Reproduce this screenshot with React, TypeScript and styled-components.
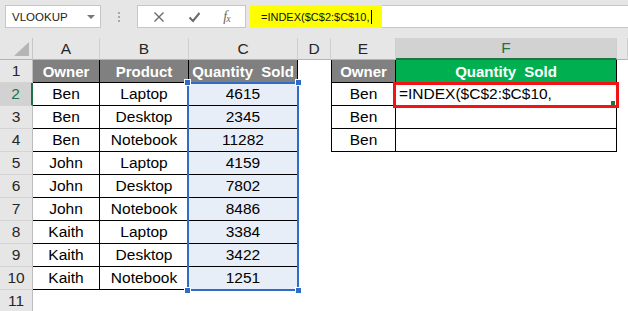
import React from 'react';
import styled, { createGlobalStyle, css } from 'styled-components';

const GlobalStyle = createGlobalStyle`
  html, body {
    margin: 0;
    padding: 0;
    background: #ffffff;
    overflow: hidden;
  }
  body {
    font-family: "Liberation Sans", Arial, sans-serif;
  }
`;

const GREEN = '#217346';
const BLUE = '#2f6cc8';

export const Window = styled.div`
  width: 628px;
  height: 311px;
  overflow: hidden;
  background: #ffffff;
`;

export const Toolbar = styled.div`
  height: 38px;
  box-sizing: border-box;
  padding: 5px 0 0 5px;
  background: #e6e6e6;
  display: flex;
  align-items: flex-start;
`;

export const NameBox = styled.div`
  width: 96px;
  height: 23px;
  box-sizing: border-box;
  background: #ffffff;
  border: 1px solid #c6c6c6;
  display: flex;
  align-items: center;
  justify-content: space-between;
  padding: 0 5px 0 6px;
  font-size: 11.5px;
  color: #222;
`;

export const Caret = styled.span`
  width: 0;
  height: 0;
  border-left: 4px solid transparent;
  border-right: 4px solid transparent;
  border-top: 4px solid #777;
`;

export const Grip = styled.div`
  width: 36px;
  height: 23px;
  display: flex;
  flex-direction: column;
  align-items: center;
  justify-content: center;
  gap: 2px;

  span {
    width: 2px;
    height: 2px;
    background: #a8a8a8;
  }
`;

export const ButtonGroup = styled.div`
  width: 109px;
  height: 23px;
  box-sizing: border-box;
  background: #ffffff;
  border: 1px solid #c6c6c6;
  display: flex;
  align-items: center;
  justify-content: space-around;
  padding: 0 4px;
`;

export const FxLabel = styled.span`
  font-family: "Liberation Serif", "Times New Roman", serif;
  font-style: italic;
  font-size: 14px;
  color: #6a6a6a;
  letter-spacing: -1px;

  sub {
    font-size: 10px;
    vertical-align: -1px;
  }
`;

export const FormulaInput = styled.div`
  flex: 1;
  margin-left: 4px;
  height: 23px;
  box-sizing: border-box;
  background: #ffffff;
  border-top: 1px solid #c6c6c6;
  border-bottom: 1px solid #c6c6c6;
  display: flex;
`;

export const Highlight = styled.div`
  width: 132px;
  background: #ffff00;
  display: flex;
  align-items: center;
  padding-left: 11px;
  box-sizing: border-box;
  font-size: 11px;
  color: #111;
  margin-top: -1px;
  margin-bottom: -1px;
`;

export const TextCaret = styled.span`
  width: 1px;
  height: 14px;
  background: #000;
  margin-left: 1px;
`;

export const Sheet = styled.div`
  display: grid;
  grid-template-columns: 33px 67px 89px 109px 33px 65px 221px 1fr;
  grid-template-rows: 22px repeat(11, 23px);
  font-size: 15.5px;
`;

type CellKind = 'corner' | 'colhead' | 'rowhead' | 'head' | 'headGreen' | 'data' | 'blank';

const kindStyles = {
  corner: css`
    background: #e6e6e6;
    border-right: 1px solid #c6c6c6;
    border-bottom: 1px solid #b4b4b4;
    justify-content: flex-end;
    align-items: flex-end;
    padding: 0 3px 3px 0;
  `,
  colhead: css`
    background: #e6e6e6;
    border-right: 1px solid #cfcfcf;
    border-bottom: 1px solid #b4b4b4;
    color: #262626;
  `,
  rowhead: css`
    background: #e6e6e6;
    border-right: 1px solid #bdbdbd;
    border-bottom: 1px solid #d4d4d4;
    color: #262626;
  `,
  head: css`
    background: #808080;
    color: #ffffff;
    font-weight: bold;
    font-size: 15px;
    border-right: 1px solid #000;
    border-bottom: 1px solid #000;
  `,
  headGreen: css`
    background: #00b050;
    color: #ffffff;
    font-weight: bold;
    font-size: 15px;
    border-right: 1px solid #000;
    border-bottom: 1px solid #000;
  `,
  data: css`
    background: #ffffff;
    color: #000;
    border-right: 1px solid #000;
    border-bottom: 1px solid #000;
  `,
  blank: css`
    background: #ffffff;
  `,
};

export const Cell = styled.div<{
  $kind: CellKind;
  $row: number;
  $col: number;
  $active?: boolean;
  $selected?: boolean;
  $edgeLeft?: boolean;
  $left?: boolean;
}>`
  grid-row: ${(p) => p.$row};
  grid-column: ${(p) => p.$col};
  box-sizing: border-box;
  display: flex;
  align-items: center;
  justify-content: center;
  white-space: pre;
  overflow: hidden;
  ${(p) => kindStyles[p.$kind]}
  ${(p) => p.$edgeLeft && css`border-left: 1px solid #000;`}
  ${(p) => p.$selected && css`background: #e8eef8;`}
  ${(p) => p.$left && css`justify-content: flex-start; padding-left: 3px;`}
  ${(p) =>
    p.$active &&
    p.$kind === 'rowhead' &&
    css`
      background: #d2d2d2;
      color: ${GREEN};
      border-right: 2px solid ${GREEN};
    `}
  ${(p) =>
    p.$active &&
    p.$kind === 'colhead' &&
    css`
      background: #d2d2d2;
      color: ${GREEN};
      border-bottom: 2px solid ${GREEN};
    `}
`;

export const Selection = styled.div`
  grid-column: 4;
  grid-row: 3 / 12;
  margin: -1px -1px -1px -2px;
  border: 2px solid ${BLUE};
  position: relative;
  pointer-events: none;
`;

export const Handle = styled.span<{ $x: 'left' | 'right'; $y: 'top' | 'bottom' }>`
  position: absolute;
  width: 5px;
  height: 5px;
  background: ${BLUE};
  border: 1px solid #ffffff;
  ${(p) => (p.$x === 'left' ? 'left: -5px;' : 'right: -5px;')}
  ${(p) => (p.$y === 'top' ? 'top: -5px;' : 'bottom: -5px;')}
`;

export const Callout = styled.div`
  grid-column: 7;
  grid-row: 3;
  margin: -1px -2px -2px -3px;
  border: 3px solid #f01414;
  position: relative;
  pointer-events: none;
`;

export const FillHandle = styled.span`
  position: absolute;
  right: 1px;
  bottom: 0;
  width: 4px;
  height: 4px;
  background: ${GREEN};
`;

const sales = [
  ['Ben', 'Laptop', '4615'],
  ['Ben', 'Desktop', '2345'],
  ['Ben', 'Notebook', '11282'],
  ['John', 'Laptop', '4159'],
  ['John', 'Desktop', '7802'],
  ['John', 'Notebook', '8486'],
  ['Kaith', 'Laptop', '3384'],
  ['Kaith', 'Desktop', '3422'],
  ['Kaith', 'Notebook', '1251'],
];

const letters = ['A', 'B', 'C', 'D', 'E', 'F', ''];

function CrossIcon() {
  return (
    <svg width="12" height="12" viewBox="0 0 12 12">
      <path d="M1.5 1.5 L10.5 10.5 M10.5 1.5 L1.5 10.5" stroke="#6a6a6a" strokeWidth="1.4" fill="none" />
    </svg>
  );
}

function CheckIcon() {
  return (
    <svg width="13" height="12" viewBox="0 0 13 12">
      <path d="M1.5 6.5 L5 10 L11.5 2" stroke="#6a6a6a" strokeWidth="2" fill="none" />
    </svg>
  );
}

function CornerTriangle() {
  return (
    <svg width="15" height="14" viewBox="0 0 15 14">
      <polygon points="15,0 15,14 0,14" fill="#b5b5b5" />
    </svg>
  );
}

function SheetRow({ r }: { r: number }) {
  const gridRow = r + 1;
  const cells: React.ReactNode[] = [];
  cells.push(
    <Cell key="h" $kind="rowhead" $row={gridRow} $col={1} $active={r === 2}>
      {r}
    </Cell>
  );

  if (r === 1) {
    ['Owner', 'Product', 'Quantity  Sold'].forEach((t, i) => {
      cells.push(
        <Cell key={'a' + i} $kind="head" $row={gridRow} $col={i + 2}>
          {t}
        </Cell>
      );
    });
  } else if (r <= 10) {
    sales[r - 2].forEach((t, i) => {
      cells.push(
        <Cell key={'a' + i} $kind="data" $row={gridRow} $col={i + 2} $selected={i === 2}>
          {t}
        </Cell>
      );
    });
  } else {
    [2, 3, 4].forEach((c) => cells.push(<Cell key={'a' + c} $kind="blank" $row={gridRow} $col={c} />));
  }

  cells.push(<Cell key="d" $kind="blank" $row={gridRow} $col={5} />);

  if (r === 1) {
    cells.push(
      <Cell key="e" $kind="head" $row={gridRow} $col={6} $edgeLeft>
        Owner
      </Cell>,
      <Cell key="f" $kind="headGreen" $row={gridRow} $col={7}>
        {'Quantity  Sold'}
      </Cell>
    );
  } else if (r <= 4) {
    cells.push(
      <Cell key="e" $kind="data" $row={gridRow} $col={6} $edgeLeft>
        Ben
      </Cell>,
      <Cell key="f" $kind="data" $row={gridRow} $col={7} $left>
        {r === 2 ? '=INDEX($C$2:$C$10,' : ''}
      </Cell>
    );
  } else {
    cells.push(
      <Cell key="e" $kind="blank" $row={gridRow} $col={6} />,
      <Cell key="f" $kind="blank" $row={gridRow} $col={7} />
    );
  }

  cells.push(<Cell key="g" $kind="blank" $row={gridRow} $col={8} />);
  return <>{cells}</>;
}

export default function App() {
  const rows = Array.from({ length: 11 }, (_, i) => i + 1);

  return (
    <Window>
      <GlobalStyle />
      <Toolbar>
        <NameBox>
          VLOOKUP
          <Caret />
        </NameBox>
        <Grip>
          <span />
          <span />
          <span />
        </Grip>
        <ButtonGroup>
          <CrossIcon />
          <CheckIcon />
          <FxLabel>
            f<sub>x</sub>
          </FxLabel>
        </ButtonGroup>
        <FormulaInput>
          <Highlight>
            =INDEX($C$2:$C$10,
            <TextCaret />
          </Highlight>
        </FormulaInput>
      </Toolbar>

      <Sheet>
        <Cell $kind="corner" $row={1} $col={1}>
          <CornerTriangle />
        </Cell>
        {letters.map((l, i) => (
          <Cell key={l + i} $kind="colhead" $row={1} $col={i + 2} $active={l === 'F'}>
            {l}
          </Cell>
        ))}
        {rows.map((r) => (
          <SheetRow key={r} r={r} />
        ))}
        <Selection>
          <Handle $x="left" $y="top" />
          <Handle $x="right" $y="top" />
          <Handle $x="left" $y="bottom" />
          <Handle $x="right" $y="bottom" />
        </Selection>
        <Callout>
          <FillHandle />
        </Callout>
      </Sheet>
    </Window>
  );
}
